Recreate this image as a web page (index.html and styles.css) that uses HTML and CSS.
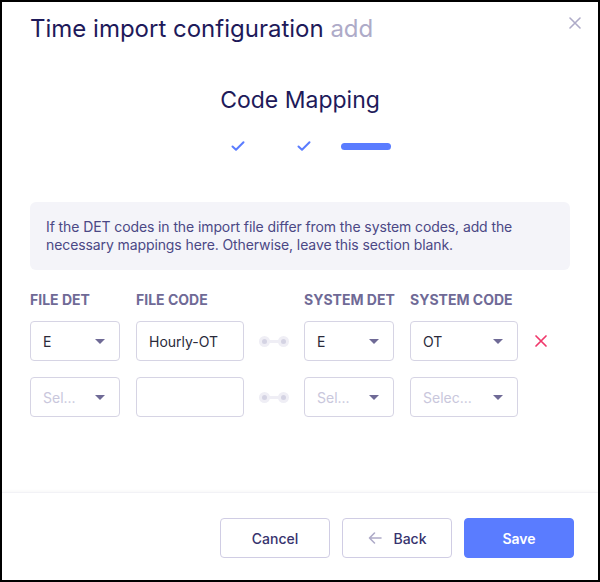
FILE: index.html
```html
<!DOCTYPE html>
<html>
<head>
<meta charset="utf-8">
<link rel="stylesheet" href="styles.css">
</head>
<body>
<div class="modal">
  <div class="header">
    <h1 class="title">Time import configuration <span class="mode">add</span></h1>
    <button class="close" aria-label="Close">
      <svg width="12" height="12" viewBox="0 0 12 12"><path d="M1 1L11 11M11 1L1 11" stroke="#aeabc8" stroke-width="1.6" stroke-linecap="round"/></svg>
    </button>
  </div>
  <div class="body">
    <h2 class="step-title">Code Mapping</h2>
    <div class="stepper">
      <svg class="check" width="14" height="12" viewBox="0 0 14 12"><path d="M1.5 6.5L5 9.8L12.5 2.2" fill="none" stroke="#5a7cff" stroke-width="2" stroke-linecap="round" stroke-linejoin="round"/></svg>
      <svg class="check second" width="14" height="12" viewBox="0 0 14 12"><path d="M1.5 6.5L5 9.8L12.5 2.2" fill="none" stroke="#5a7cff" stroke-width="2" stroke-linecap="round" stroke-linejoin="round"/></svg>
      <span class="bar"></span>
    </div>
    <div class="info">If the DET codes in the import file differ from the system codes, add the necessary mappings here. Otherwise, leave this section blank.</div>
    <div class="grid">
      <div class="label">FILE DET</div>
      <div class="label">FILE CODE</div>
      <div></div>
      <div class="label">SYSTEM DET</div>
      <div class="label">SYSTEM CODE</div>
      <div></div>

      <div class="field select"><span class="val">E</span><span class="caret"></span></div>
      <div class="field"><span class="val">Hourly-OT</span></div>
      <div class="link"><span class="dot"></span><span class="line"></span><span class="dot"></span></div>
      <div class="field select"><span class="val">E</span><span class="caret"></span></div>
      <div class="field select"><span class="val">OT</span><span class="caret"></span></div>
      <div class="del">
        <svg width="14" height="14" viewBox="0 0 14 14"><path d="M2 2L12 12M12 2L2 12" stroke="#f0386b" stroke-width="1.7" stroke-linecap="round"/></svg>
      </div>

      <div class="field select"><span class="ph">Sel...</span><span class="caret"></span></div>
      <div class="field"></div>
      <div class="link"><span class="dot"></span><span class="line"></span><span class="dot"></span></div>
      <div class="field select"><span class="ph">Sel...</span><span class="caret"></span></div>
      <div class="field select"><span class="ph">Selec...</span><span class="caret"></span></div>
      <div></div>
    </div>
  </div>
  <div class="footer">
    <button class="btn">Cancel</button>
    <button class="btn back">
      <svg width="16" height="14" viewBox="0 0 16 14"><path d="M14 7H2.5M7.5 2L2.5 7L7.5 12" fill="none" stroke="#aeabc8" stroke-width="1.6" stroke-linecap="round" stroke-linejoin="round"/></svg>
      Back
    </button>
    <button class="btn primary">Save</button>
  </div>
</div>
</body>
</html>
```
FILE: styles.css
```css
* { box-sizing: border-box; }
html, body { margin: 0; padding: 0; background: #fff; }
body { font-family: Inter, "Noto Sans", sans-serif; }

.modal {
  width: 600px;
  height: 582px;
  border: 2px solid #000;
  display: flex;
  flex-direction: column;
  background: #fff;
}

.header {
  position: relative;
  padding: 12px 24px 0 28px;
}
.title {
  margin: 0;
  font-size: 24px;
  line-height: 30px;
  font-weight: 400;
  color: #1e1a5a;
  letter-spacing: 0;
}
.mode { color: #aeabc8; }
.close {
  position: absolute;
  top: 15px;
  right: 17px;
  width: 12px;
  height: 12px;
  padding: 0;
  border: 0;
  background: none;
  display: flex;
}

.body {
  flex: 1;
  padding: 0 28px;
}
.step-title {
  margin: 42px 0 0;
  text-align: center;
  font-size: 23px;
  line-height: 28px;
  font-weight: 400;
  color: #1e1a5a;
}
.stepper {
  margin-top: 26px;
  height: 12px;
  display: flex;
  align-items: center;
  justify-content: center;
  padding-left: 22px;
}
.check { display: block; }
.check.second { margin-left: 52px; }
.bar {
  margin-left: 30px;
  width: 50px;
  height: 7px;
  border-radius: 4px;
  background: #5a7cff;
}

.info {
  margin-top: 50px;
  background: #f4f4f9;
  border-radius: 6px;
  padding: 16px 16px;
  font-size: 14px;
  line-height: 18px;
  color: #4b4885;
  letter-spacing: -0.1px;
}

.grid {
  margin-top: 22px;
  display: grid;
  grid-template-columns: 90px 108px 28px 90px 108px 14px;
  column-gap: 16px;
  row-gap: 16px;
}
.grid > .label { margin-bottom: -3px; }
.label {
  font-size: 14px;
  line-height: 16px;
  font-weight: 700;
  color: #6f6a96;
  white-space: nowrap;
}
.field {
  height: 40px;
  border: 1px solid #d6d4e4;
  border-radius: 4px;
  display: flex;
  align-items: center;
  padding: 0 12px;
  font-size: 14px;
  color: #2a2a3a;
}
.select { justify-content: space-between; padding-right: 14px; }
.ph { color: #c9c7dc; }
.caret {
  width: 0;
  height: 0;
  border-left: 5px solid transparent;
  border-right: 5px solid transparent;
  border-top: 5px solid #6f6a96;
}
.link {
  display: flex;
  align-items: center;
  justify-content: center;
}
.dot {
  width: 5px;
  height: 5px;
  border-radius: 50%;
  background: #d4d3e3;
  box-shadow: 0 0 0 3px #efeef5;
}
.line {
  width: 14px;
  height: 3px;
  background: #efeef5;
}
.del {
  display: flex;
  align-items: center;
}

.footer {
  border-top: 1px solid #f2f2f6;
  box-shadow: 0 -1px 3px rgba(0,0,0,0.03);
  padding: 25px 24px 22px;
  display: flex;
  justify-content: flex-end;
  gap: 12px;
}
.btn {
  width: 110px;
  height: 40px;
  border: 1px solid #d0cde4;
  border-radius: 4px;
  background: #fff;
  font-family: Inter, "Noto Sans", sans-serif;
  font-size: 14px;
  font-weight: 500;
  color: #37336e;
  display: flex;
  align-items: center;
  justify-content: center;
  gap: 10px;
  padding: 0;
}
.back svg { display: block; }
.primary {
  background: #5a7cff;
  border-color: #5a7cff;
  color: #fff;
  font-weight: 600;
}
```
